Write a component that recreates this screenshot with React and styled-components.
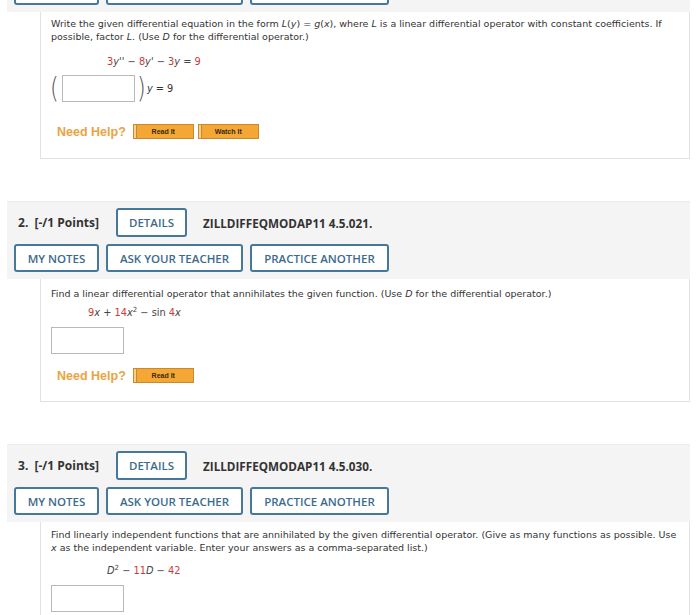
import React from "react";
import styled, { createGlobalStyle } from "styled-components";

const GlobalStyle = createGlobalStyle`
  html, body {
    margin: 0;
    padding: 0;
    background: #ffffff;
  }
  #root {
    height: 615px;
    overflow: hidden;
  }
`;

const Page = styled.div`
  padding: 0 10px 0 7px;
`;

const Section = styled.section`
  margin-top: ${(p) => (p.$cut ? "-66px" : "0")};
  margin-bottom: 42px;
`;

const Header = styled.div`
  background: #f4f4f4;
  border-top: 1px solid #ececec;
  padding: 6px 0 7px 7px;
  display: flex;
  flex-direction: column;
  gap: 7px;
`;

const HeaderRow = styled.div`
  display: flex;
  align-items: center;
  gap: 7px;
`;

const Points = styled.span`
  width: 98px;
  margin-left: 4px;
  margin-right: -7px;
  font-family: "Open Sans", "DejaVu Sans", sans-serif;
  font-weight: 700;
  font-size: 12px;
  color: #333;
  white-space: pre;
`;

const Code = styled.span`
  margin-left: 9px;
  font-family: "Open Sans", "DejaVu Sans", sans-serif;
  font-weight: 700;
  font-size: 11.7px;
  color: #333;
`;

const OutlineButton = styled.button`
  height: ${(p) => (p.$tall ? "29px" : "28px")};
  width: ${(p) => p.$w}px;
  padding: 0;
  background: #ffffff;
  border: 2px solid #46789a;
  border-radius: 3px;
  font-family: "Open Sans", "DejaVu Sans", sans-serif;
  font-weight: 600;
  font-size: 11.5px;
  color: #3b6b8c;
  cursor: pointer;
`;

const Body = styled.div`
  margin-left: 33px;
  background: #ffffff;
  border: 1px solid #e2e2e2;
  border-top: none;
  padding: ${(p) => p.$top}px 8px ${(p) => p.$bottom}px 10px;
`;

const Text = styled.p`
  margin: 0;
  font-family: "DejaVu Sans", Verdana, sans-serif;
  font-size: 9.5px;
  line-height: 13px;
  color: #333;
`;

const Expr = styled.div`
  margin-top: ${(p) => p.$mt}px;
  padding-left: ${(p) => p.$indent}px;
  font-family: "DejaVu Sans", Verdana, sans-serif;
  font-size: 9.8px;
  line-height: 12px;
  color: #444;
`;

const Red = styled.span`
  color: #c93a3a;
`;

const Var = styled.i`
  font-style: italic;
`;

const Sup = styled.sup`
  font-size: 7px;
  line-height: 0;
  vertical-align: 4px;
`;

const ParenRow = styled.div`
  margin-top: 7px;
  display: flex;
  align-items: center;
  font-family: "DejaVu Sans", Verdana, sans-serif;
  font-size: 9.8px;
  color: #333;
`;

const Paren = styled.span`
  font-family: "DejaVu Sans", sans-serif;
  font-weight: 200;
  font-size: 28px;
  line-height: 27px;
  color: #555;
  transform: scaleX(0.8);
  margin: ${(p) => (p.$close ? "0 0 0 1px" : "0 2px 0 -2px")};
`;

const AnswerBox = styled.input`
  box-sizing: border-box;
  display: block;
  width: 73px;
  height: 27px;
  margin-top: ${(p) => p.$mt || 0}px;
  border: 1px solid #b9b9b9;
  background: #fff;
  padding: 0;
`;

const HelpRow = styled.div`
  margin-top: ${(p) => p.$mt}px;
  padding-left: 6px;
  display: flex;
  align-items: center;
  gap: 4px;
`;

const HelpLabel = styled.span`
  font-family: "Liberation Sans", Arial, sans-serif;
  font-weight: 700;
  font-size: 12.5px;
  color: #e9a441;
  margin-right: 3px;
`;

const HelpButton = styled.button`
  width: 61px;
  height: 15px;
  padding: 0;
  background: #f5a735;
  border: 1px solid #c98a2c;
  box-shadow: inset 2px 0 0 #fbd08e, inset 3px 0 0 #c98a2c;
  font-family: "Liberation Sans", Arial, sans-serif;
  font-weight: 700;
  font-size: 7px;
  color: #3a2a10;
  cursor: pointer;
`;

const QuestionHeader = ({ number, code }) => (
  <Header>
    <HeaderRow>
      <Points>{number}.  [-/1 Points]</Points>
      <OutlineButton $w={71} $tall>DETAILS</OutlineButton>
      <Code>{code}</Code>
    </HeaderRow>
    <HeaderRow>
      <OutlineButton $w={85}>MY NOTES</OutlineButton>
      <OutlineButton $w={137}>ASK YOUR TEACHER</OutlineButton>
      <OutlineButton $w={139}>PRACTICE ANOTHER</OutlineButton>
    </HeaderRow>
  </Header>
);

const App = () => {
  return (
    <>
      <GlobalStyle />
      <Page>
        <Section $cut>
          <QuestionHeader number={1} code="ZILLDIFFEQMODAP11 4.5.017." />
          <Body $top={5} $bottom={19}>
            <Text>
              Write the given differential equation in the form <Var>L</Var>(<Var>y</Var>) = <Var>g</Var>(<Var>x</Var>),
              where <Var>L</Var> is a linear differential operator with constant coefficients. If
              possible, factor <Var>L</Var>. (Use <Var>D</Var> for the differential operator.)
            </Text>
            <Expr $mt={13} $indent={56}>
              <Red>3</Red><Var>y</Var>'' − <Red>8</Red><Var>y</Var>' − <Red>3</Red><Var>y</Var> = <Red>9</Red>
            </Expr>
            <ParenRow>
              <Paren>(</Paren>
              <AnswerBox />
              <Paren $close>)</Paren>
              <span><Var>y</Var> = 9</span>
            </ParenRow>
            <HelpRow $mt={22}>
              <HelpLabel>Need Help?</HelpLabel>
              <HelpButton>Read It</HelpButton>
              <HelpButton>Watch It</HelpButton>
            </HelpRow>
          </Body>
        </Section>

        <Section>
          <QuestionHeader number={2} code="ZILLDIFFEQMODAP11 4.5.021." />
          <Body $top={8} $bottom={18}>
            <Text>
              Find a linear differential operator that annihilates the given function. (Use <Var>D</Var> for the differential operator.)
            </Text>
            <Expr $mt={7} $indent={37}>
              <Red>9</Red><Var>x</Var> + <Red>14</Red><Var>x</Var><Sup>2</Sup> − sin <Red>4</Red><Var>x</Var>
            </Expr>
            <AnswerBox $mt={8} />
            <HelpRow $mt={14}>
              <HelpLabel>Need Help?</HelpLabel>
              <HelpButton>Read It</HelpButton>
            </HelpRow>
          </Body>
        </Section>

        <Section>
          <QuestionHeader number={3} code="ZILLDIFFEQMODAP11 4.5.030." />
          <Body $top={6} $bottom={18}>
            <Text>
              Find linearly independent functions that are annihilated by the given differential operator. (Give as many functions as possible. Use
              {" "}<Var>x</Var> as the independent variable. Enter your answers as a comma-separated list.)
            </Text>
            <Expr $mt={11} $indent={56}>
              <Var>D</Var><Sup>2</Sup> − <Red>11</Red><Var>D</Var> − <Red>42</Red>
            </Expr>
            <AnswerBox $mt={8} />
          </Body>
        </Section>
      </Page>
    </>
  );
};

export default App;
